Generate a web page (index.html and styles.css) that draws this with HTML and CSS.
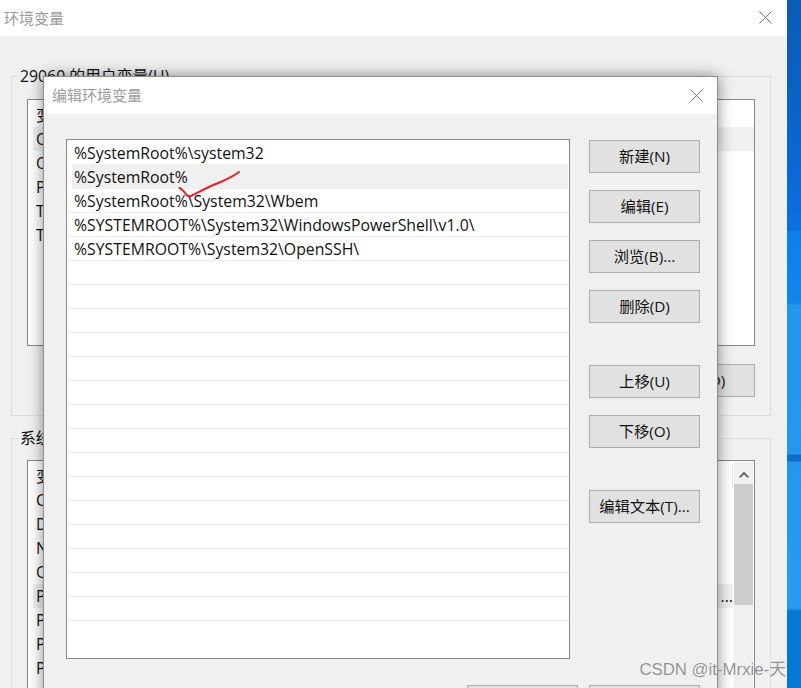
FILE: index.html
```html
<!DOCTYPE html>
<html lang="zh-CN">
<head>
<meta charset="utf-8">
<title>编辑环境变量</title>
<link rel="stylesheet" href="styles.css">
</head>
<body>
<div class="desktop">
  <section class="window outer">
    <header class="titlebar outer-title">
      <span class="title">环境变量</span>
      <svg class="close" viewBox="0 0 13 13"><path d="M.5.5l12 12M12.5.5l-12 12"/></svg>
    </header>
    <div class="outer-body">
      <fieldset class="group group-user">
        <legend>29060 的用户变量(U)</legend>
        <div class="list list-user">
          <div class="var-row">变量</div>
          <div class="var-row var-selected">O</div>
          <div class="var-row">O</div>
          <div class="var-row">P</div>
          <div class="var-row">T</div>
          <div class="var-row">T</div>
        </div>
        <div class="group-actions"><button class="btn">删除(D)</button></div>
      </fieldset>
      <fieldset class="group group-system">
        <legend>系统变量(S)</legend>
        <div class="list list-system">
          <div class="sys-rows">
            <div class="var-row sys-head">变量</div>
            <div class="var-row">C</div>
            <div class="var-row">D</div>
            <div class="var-row">N</div>
            <div class="var-row">O</div>
            <div class="var-row sys-selected"><span>P</span><span>...</span></div>
            <div class="var-row">P</div>
            <div class="var-row">P</div>
            <div class="var-row">P</div>
          </div>
          <div class="scrollbar">
            <svg class="arrow" viewBox="0 0 10 6"><path d="M.7 5.3L5 1l4.3 4.3"/></svg>
            <div class="thumb"></div>
          </div>
        </div>
      </fieldset>
    </div>
  </section>

  <section class="window dialog">
    <header class="titlebar dialog-title">
      <span class="title dialog-name">编辑环境变量</span>
      <svg class="close" viewBox="0 0 13 13"><path d="M.5.5l12 12M12.5.5l-12 12"/></svg>
    </header>
    <div class="dialog-body">
      <div class="path-list">
        <div class="path-row">%SystemRoot%\system32</div>
        <div class="path-row path-selected">%SystemRoot%</div>
        <div class="path-row">%SystemRoot%\System32\Wbem</div>
        <div class="path-row">%SYSTEMROOT%\System32\WindowsPowerShell\v1.0\</div>
        <div class="path-row">%SYSTEMROOT%\System32\OpenSSH\</div>
        <div class="path-row"></div><div class="path-row"></div><div class="path-row"></div>
        <div class="path-row"></div><div class="path-row"></div><div class="path-row"></div>
        <div class="path-row"></div><div class="path-row"></div><div class="path-row"></div>
        <div class="path-row"></div><div class="path-row"></div><div class="path-row"></div>
        <div class="path-row"></div><div class="path-row"></div><div class="path-row"></div>
        <div class="path-row last"></div>
      </div>
      <div class="side-buttons">
        <div class="btn-stack">
          <button class="btn">新建(N)</button>
          <button class="btn">编辑(E)</button>
          <button class="btn">浏览(B)...</button>
          <button class="btn">删除(D)</button>
        </div>
        <div class="btn-stack">
          <button class="btn">上移(U)</button>
          <button class="btn">下移(O)</button>
        </div>
        <div class="btn-stack">
          <button class="btn">编辑文本(T)...</button>
        </div>
      </div>
    </div>
    <footer class="dialog-footer">
      <button class="btn"></button>
      <button class="btn"></button>
    </footer>
  </section>

  <svg class="annotation" viewBox="0 0 61 27"><path d="M.5 17C3 18 5 20 7 23c1.500 2.500 3 2.800 5 2C20 21 29 16 38 12.500 45 9.500 52 7 60 1"/></svg>
  <div class="watermark">CSDN @it-Mrxie-天</div>
</div>
</body>
</html>
```
FILE: styles.css
```css
* { box-sizing: border-box; }
html, body { margin: 0; padding: 0; }
body { width: 801px; height: 688px; overflow: hidden; font-family: "Open Sans", "Noto Sans CJK SC", sans-serif; font-size: 15.800px; color: #111; }
.desktop { position: relative; width: 801px; height: 688px; overflow: hidden;
  background: linear-gradient(180deg, #0a5cb6 0, #0a66d0 150px, #0a70e2 230px, #0a80ea 231px, #0f86ec 303px, #2496ee 305px, #2696ee 454px, #0a6ccc 455px, #0a6ccc 461px, #2496ee 462px, #2a9bf0 608px, #0678d4 611px, #0678d4 100%); }
.window { position: absolute; background: #f0f0f0; }
.outer { left: 0; top: 0; width: 787px; height: 688px; }
.dialog { left: 43px; top: 76px; width: 675px; height: 640px; border: 1px solid #8d8d8d; border-bottom: 0; box-shadow: 0 0 14px rgba(0,0,0,.45); }
.titlebar { display: flex; align-items: center; justify-content: space-between; background: #fff; padding-bottom: 1px; }
.title { color: #9c9c9c; font-size: 15px; }
.dialog-name { margin-bottom: 2px; }
.outer-title { height: 36px; padding-left: 4px; padding-right: 15px; }
.dialog-title { height: 37px; padding-left: 8px; padding-right: 14px; }
.close { width: 13px; height: 13px; fill: none; stroke: #7a7a7a; stroke-width: 1; }

.outer-body { padding: 30px 16px 0 11px; display: flex; flex-direction: column; gap: 12px; }
.group { margin: 0; padding: 0 15px; border: 1px solid #dcdcdc; min-width: 0; width: 760px; }
.group legend { padding: 0 2px; margin-left: -9px; font-size: 15.800px; line-height: 20px; white-space: nowrap; }
.group-user { height: 350px; padding-top: 13px; }
.group-system { height: 300px; padding-top: 12px; }
.list { background: #fff; border: 1px solid #828790; }
.list-user { height: 247px; padding: 3px 0 0 5px; }
.var-row { height: 24px; line-height: 24px; padding-left: 3px; }
.var-selected { background: #f0f0f0; }
.group-actions { display: flex; justify-content: flex-end; margin-top: 18px; }
.group-actions .btn { width: 110px; }
.list-system { height: 240px; display: flex; padding: 3px 1px 0 5px; }
.sys-rows { flex: 1; min-width: 0; }
.sys-head { border-right: 1px solid #e5e5e5; }
.sys-selected { display: flex; justify-content: space-between; background: #f0f0f0; }
.scrollbar { width: 19px; background: #f0f0f0; margin-left: 1px; margin-top: -2px; }
.arrow { display: block; width: 10px; height: 6px; margin: 10px auto 6px; fill: none; stroke: #606060; stroke-width: 1.800; }
.thumb { height: 121px; background: #cdcdcd; }

.dialog-body { position: relative; display: flex; padding: 25px 18px 0 22px; }
.path-list { flex: none; width: 504px; height: 520px; background: #fff; border: 1px solid #828790; padding: 1px 0 0 1px; }
.path-row { height: 24px; line-height: 25px; padding-left: 6px; border-bottom: 1px solid #f0f0f0; white-space: nowrap; }
.path-row:first-child { border-bottom-color: transparent; }
.path-selected { height: 25px; line-height: 27px; margin: -1px 1px 0 4px; padding-left: 2px; background: #f0f0f0; border-bottom: 0; }
.last { height: 14px; border-bottom: 0; }
.side-buttons { flex: none; margin-left: 19px; padding-top: 1px; display: flex; flex-direction: column; gap: 42px; }
.btn-stack { display: flex; flex-direction: column; gap: 17px; }
.btn { width: 111px; height: 33px; padding: 0 0 4px; border: 1px solid #adadad; background: #e1e1e1; font: inherit; font-size: 15.300px; color: #111; }
.dialog-footer { position: absolute; left: 423px; top: 608px; display: flex; gap: 11px; }

.annotation { position: absolute; left: 179px; top: 171px; width: 61px; height: 27px; fill: none; stroke: #e8202c; stroke-width: 2; stroke-linecap: round; overflow: visible; }
.watermark { position: absolute; right: 15px; top: 656px; font-family: "Liberation Sans", "Noto Sans CJK SC", sans-serif; font-size: 16.800px; color: rgba(100,100,100,.7); text-shadow: 0 0 1px rgba(255,255,255,.8); white-space: nowrap; }
```
